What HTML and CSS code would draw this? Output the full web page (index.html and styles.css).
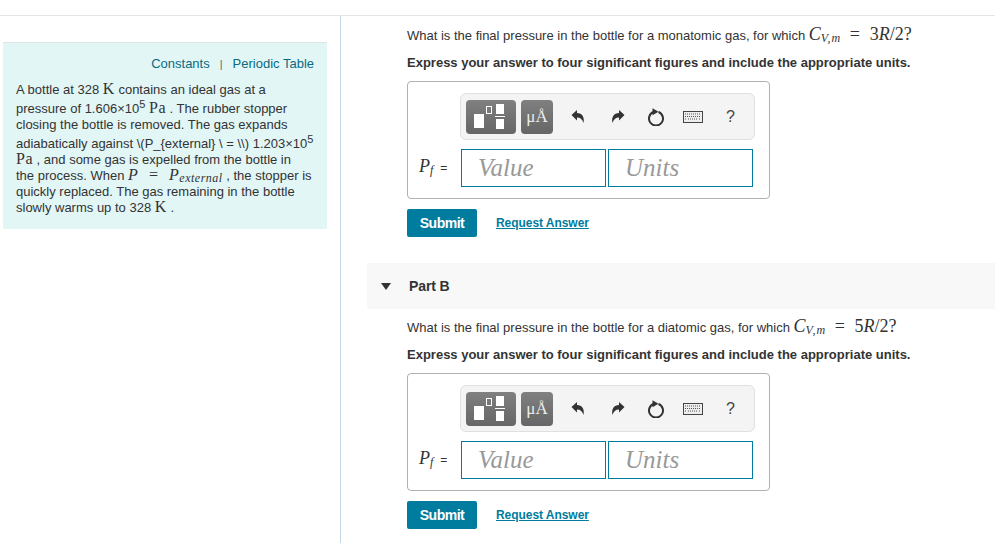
FILE: index.html
```html
<!DOCTYPE html>
<html lang="en">
<head>
  <meta charset="UTF-8" />
  <meta name="viewport" content="width=device-width, initial-scale=1.0"/>
  <title>Part A and Part B</title>
  <link rel="stylesheet" href="styles.css">
</head>
<body>
  <div class="page">
    <aside class="sidebar">
      <div class="info">
        <div class="info-links"><a>Constants</a><span class="sep">|</span><a>Periodic Table</a></div>
        <p class="info-text">
          <span>A bottle at 328 <span class="rm">K</span> contains an ideal gas at a</span>
          <span class="tall">pressure of 1.606×10<sup>5</sup> <span class="rm">Pa</span> . The rubber stopper</span>
          <span>closing the bottle is removed. The gas expands</span>
          <span class="tall">adiabatically against \(P_{external} \ = \\) 1.203×10<sup>5</sup></span>
          <span><span class="rm">Pa</span> , and some gas is expelled from the bottle in</span>
          <span>the process. When <i class="rm">P</i> <span class="rm eq">=</span> <i class="rm">P<sub>external</sub></i> , the stopper is</span>
          <span>quickly replaced. The gas remaining in the bottle</span>
          <span>slowly warms up to 328 <span class="rm">K</span> .</span>
        </p>
      </div>
    </aside>

    <main class="content">
      <section class="part">
        <p class="question">What is the final pressure in the bottle for a monatomic gas, for which <i class="rm">C<sub>V,m</sub></i> <span class="rm eq">=</span> <span class="rm">3<i>R</i>/2?</span></p>
        <p class="instruct">Express your answer to four significant figures and include the appropriate units.</p>
        <div class="answer-box">
          <div class="toolbar">
            <button class="tool tool-template">
              <svg width="50" height="34" viewBox="0 0 50 34"><rect x="8" y="14" width="10" height="14" fill="#fff"/><rect x="20.5" y="6.5" width="5" height="7" fill="none" stroke="#fff"/><rect x="30" y="4" width="8" height="10" fill="#fff"/><rect x="29" y="16" width="10" height="1" fill="#fff"/><rect x="30" y="19" width="8" height="10" fill="#fff"/></svg>
            </button>
            <button class="tool tool-units">μÅ</button>
            <svg class="icon" width="14" height="15" viewBox="0 0 14 15"><path d="M0.5 6 6 1V4C11 4 13.8 8 12.5 14 11.5 10.5 9.5 8.5 6 8.5V11.5Z" fill="#333"/></svg>
            <svg class="icon" width="14" height="15" viewBox="0 0 14 15"><path d="M13.5 6 8 1V4C3 4 0.2 8 1.5 14 2.5 10.5 4.5 8.5 8 8.5V11.5Z" fill="#333"/></svg>
            <svg class="icon" width="18" height="18" viewBox="0 0 18 18"><path d="M11.5 4A7 7 0 1 1 6.5 4" fill="none" stroke="#333" stroke-width="2"/><path d="M5.5 0.3 11.5 3.8 5.5 7.2Z" fill="#333"/></svg>
            <svg class="icon" width="20" height="12" viewBox="0 0 20 12"><rect x="0.5" y="0.5" width="19" height="11" fill="#eee" stroke="#444"/><path d="M2 3H18M2 5.5H18M2 8H4M5 8H15M16 8H18" stroke="#555" stroke-dasharray="1 1" fill="none"/></svg>
            <span class="help">?</span>
          </div>
          <div class="input-row">
            <span class="label"><i class="rm">P<sub>f</sub></i> =</span>
            <div class="field">Value</div>
            <div class="field">Units</div>
          </div>
        </div>
        <div class="actions">
          <button class="submit">Submit</button>
          <a class="request">Request Answer</a>
        </div>
      </section>

      <div class="part-header">
        <span class="caret"></span>
        <span class="part-title">Part B</span>
      </div>

      <section class="part">
        <p class="question">What is the final pressure in the bottle for a diatomic gas, for which <i class="rm">C<sub>V,m</sub></i> <span class="rm eq">=</span> <span class="rm">5<i>R</i>/2?</span></p>
        <p class="instruct">Express your answer to four significant figures and include the appropriate units.</p>
        <div class="answer-box">
          <div class="toolbar">
            <button class="tool tool-template">
              <svg width="50" height="34" viewBox="0 0 50 34"><rect x="8" y="14" width="10" height="14" fill="#fff"/><rect x="20.5" y="6.5" width="5" height="7" fill="none" stroke="#fff"/><rect x="30" y="4" width="8" height="10" fill="#fff"/><rect x="29" y="16" width="10" height="1" fill="#fff"/><rect x="30" y="19" width="8" height="10" fill="#fff"/></svg>
            </button>
            <button class="tool tool-units">μÅ</button>
            <svg class="icon" width="14" height="15" viewBox="0 0 14 15"><path d="M0.5 6 6 1V4C11 4 13.8 8 12.5 14 11.5 10.5 9.5 8.5 6 8.5V11.5Z" fill="#333"/></svg>
            <svg class="icon" width="14" height="15" viewBox="0 0 14 15"><path d="M13.5 6 8 1V4C3 4 0.2 8 1.5 14 2.5 10.5 4.5 8.5 8 8.5V11.5Z" fill="#333"/></svg>
            <svg class="icon" width="18" height="18" viewBox="0 0 18 18"><path d="M11.5 4A7 7 0 1 1 6.5 4" fill="none" stroke="#333" stroke-width="2"/><path d="M5.5 0.3 11.5 3.8 5.5 7.2Z" fill="#333"/></svg>
            <svg class="icon" width="20" height="12" viewBox="0 0 20 12"><rect x="0.5" y="0.5" width="19" height="11" fill="#eee" stroke="#444"/><path d="M2 3H18M2 5.5H18M2 8H4M5 8H15M16 8H18" stroke="#555" stroke-dasharray="1 1" fill="none"/></svg>
            <span class="help">?</span>
          </div>
          <div class="input-row">
            <span class="label"><i class="rm">P<sub>f</sub></i> =</span>
            <div class="field">Value</div>
            <div class="field">Units</div>
          </div>
        </div>
        <div class="actions">
          <button class="submit">Submit</button>
          <a class="request">Request Answer</a>
        </div>
      </section>
    </main>
  </div>
</body>
</html>
```

FILE: styles.css
```css
* {
  box-sizing: border-box;
}

html, body {
  height: 100%;
}

body {
  margin: 0;
  background-color: #fff;
  color: #333;
  font-family: 'Liberation Sans', Arial, sans-serif;
  font-size: 13px;
  overflow: hidden;
}

.page {
  display: flex;
  height: 543px;
  margin-top: 15px;
  border-top: 1px solid #e4e4e4;
}

.rm {
  font-family: 'Liberation Serif', serif;
  font-size: 18px;
  line-height: 0;
}

.rm sub {
  font-size: 12px;
  line-height: 0;
  letter-spacing: 0.5px;
  vertical-align: -2px;
}

/* left panel */
.sidebar {
  width: 341px;
  flex-shrink: 0;
  padding: 26px 13px 0 3px;
  border-right: 1px solid #c5d6e8;
}

.info {
  height: 187px;
  padding: 13px 13px 0;
  background-color: #e2f6f6;
  border-top: 1px solid #dfe5e7;
}

.info-links {
  text-align: right;
  color: #0b6a80;
  font-size: 13px;
  line-height: 15px;
}

.sep {
  margin: 0 10px;
  color: #666;
  font-size: 11px;
}

.info-text {
  margin: 10px 0 0;
}

.info-text > span {
  display: block;
  height: 16px;
  line-height: 16px;
  white-space: nowrap;
}

.info-text > .tall {
  margin-top: 3px;
}

.info-text sup {
  font-size: 11px;
  line-height: 0;
}

.info-text .rm {
  font-size: 16px;
  letter-spacing: 0.5px;
}

.info-text .eq {
  margin: 0 7px;
}

/* right column */
.content {
  flex: 1;
  padding: 11px 0 0 26px;
  min-width: 0;
}

.part {
  padding-left: 40px;
}

.question {
  margin: 0;
  line-height: 18px;
  white-space: nowrap;
}

.question sub {
  letter-spacing: 1px;
}

.question .eq {
  margin: 0 6px 0 5px;
}

.instruct {
  margin: 9px 0 0;
  font-weight: bold;
  line-height: 18px;
  white-space: nowrap;
}

.answer-box {
  width: 363px;
  height: 118px;
  margin-top: 9px;
  padding: 11px 15px 0 52px;
  border: 1px solid #b0b0b0;
  border-radius: 4px;
}

.toolbar {
  display: flex;
  align-items: center;
  width: 295px;
  height: 47px;
  padding-left: 5px;
  background-color: #f4f4f4;
  border: 1px solid #e0e0e0;
  border-radius: 6px;
}

.tool {
  height: 34px;
  padding: 0;
  border: none;
  border-radius: 4px;
  background: linear-gradient(#808080, #666);
  color: #fff;
}

.tool-template {
  width: 50px;
  margin-right: 5px;
}

.tool-template svg {
  display: block;
}

.tool-units {
  width: 32px;
  color: #eee;
  font-family: 'Liberation Serif', serif;
  font-size: 17px;
}

.icon {
  flex-shrink: 0;
}

.icon:nth-of-type(1) {
  margin-left: 18px;
}

.icon:nth-of-type(2) {
  margin-left: 26px;
}

.icon:nth-of-type(3) {
  margin-left: 22px;
}

.icon:nth-of-type(4) {
  margin-left: 18px;
}

.help {
  margin-left: 23px;
  font-size: 16px;
  color: #444;
}

.input-row {
  display: flex;
  align-items: center;
  gap: 2px;
  margin: 9px 0 0 -40px;
}

.label {
  width: 40px;
  margin-left: -1px;
  font-size: 12px;
  white-space: nowrap;
}

.label i {
  margin-right: 3px;
}

.field {
  width: 145px;
  height: 38px;
  padding-left: 16px;
  border: 1px solid #007c9e;
  color: #999;
  font-family: 'Liberation Serif', serif;
  font-size: 25px;
  font-style: italic;
  line-height: 35px;
}

.actions {
  display: flex;
  align-items: center;
  margin-top: 10px;
}

.submit {
  width: 70px;
  height: 28px;
  padding: 0;
  border: none;
  border-radius: 2px;
  background-color: #007c9e;
  color: #fff;
  font-family: 'Liberation Sans', Arial, sans-serif;
  font-size: 14px;
  font-weight: bold;
  letter-spacing: -0.5px;
}

.request {
  margin-left: 19px;
  color: #007c9e;
  font-size: 12px;
  font-weight: bold;
  letter-spacing: -0.05px;
  text-decoration: underline;
}

.part-header {
  display: flex;
  align-items: center;
  height: 46px;
  margin-top: 26px;
  background-color: #f8f8f8;
}

.caret {
  width: 0;
  height: 0;
  margin-left: 14px;
  border-left: 5px solid transparent;
  border-right: 5px solid transparent;
  border-top: 7px solid #333;
}

.part-title {
  margin-left: 18px;
  font-size: 14px;
  font-weight: bold;
  letter-spacing: -0.1px;
}

.part-header + .part {
  padding-top: 10px;
}
```
